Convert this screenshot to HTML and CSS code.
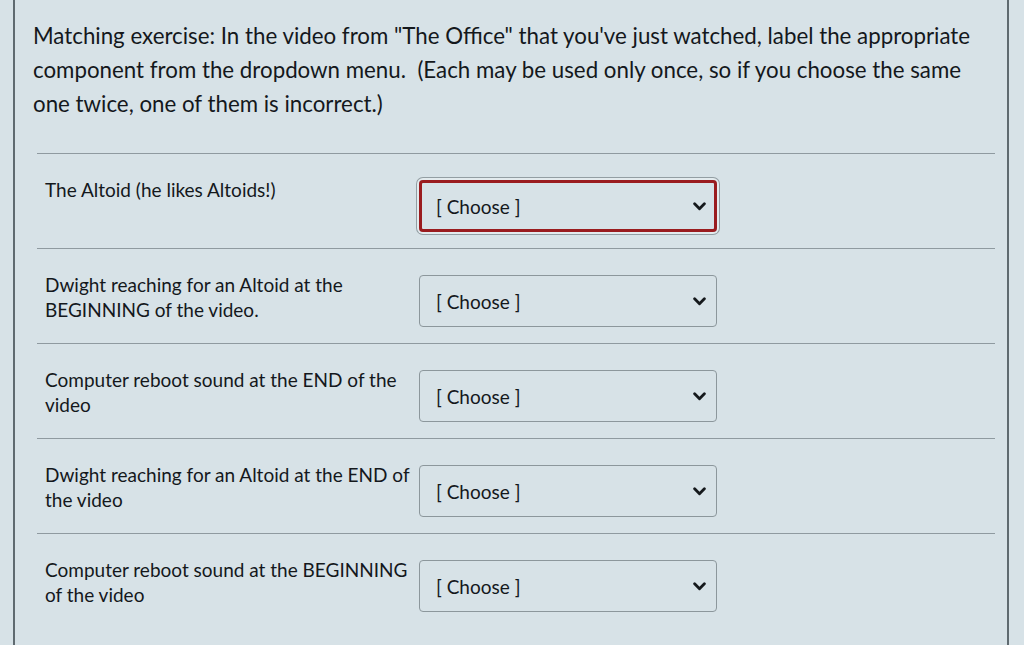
FILE: index.html
```html
<!DOCTYPE html>
<html lang="en">
<head>
<meta charset="utf-8">
<title>Matching exercise</title>
<link rel="stylesheet" href="styles.css">
</head>
<body>
<div class="page">
  <p class="prompt">Matching exercise: In the video from "The Office" that you've just watched, label the appropriate component from the dropdown menu.&nbsp; (Each may be used only once, so if you choose the same one twice, one of them is incorrect.)</p>
  <div class="list">
    <div class="row">
      <div class="label">The Altoid (he likes Altoids!)</div>
      <div class="select error"><span>[ Choose ]</span><svg class="chev" viewBox="0 0 12 8"><polyline points="1.5,1.5 6,6 10.5,1.5"/></svg></div>
    </div>
    <div class="row">
      <div class="label">Dwight reaching for an Altoid at the BEGINNING of the video.</div>
      <div class="select"><span>[ Choose ]</span><svg class="chev" viewBox="0 0 12 8"><polyline points="1.5,1.5 6,6 10.5,1.5"/></svg></div>
    </div>
    <div class="row">
      <div class="label">Computer reboot sound at the END of the video</div>
      <div class="select"><span>[ Choose ]</span><svg class="chev" viewBox="0 0 12 8"><polyline points="1.5,1.5 6,6 10.5,1.5"/></svg></div>
    </div>
    <div class="row">
      <div class="label">Dwight reaching for an Altoid at the END of the video</div>
      <div class="select"><span>[ Choose ]</span><svg class="chev" viewBox="0 0 12 8"><polyline points="1.5,1.5 6,6 10.5,1.5"/></svg></div>
    </div>
    <div class="row last">
      <div class="label">Computer reboot sound at the BEGINNING of the video</div>
      <div class="select"><span>[ Choose ]</span><svg class="chev" viewBox="0 0 12 8"><polyline points="1.5,1.5 6,6 10.5,1.5"/></svg></div>
    </div>
  </div>
</div>
</body>
</html>
```
FILE: styles.css
```css
html, body {
  margin: 0;
  padding: 0;
  background: #d7e2e7;
}
body {
  font-family: Lato, "Open Sans", "Liberation Sans", sans-serif;
  color: #14181c;
  width: 1024px;
  height: 645px;
  overflow: hidden;
}
.page {
  margin-left: 13px;
  width: 996px;
  min-height: 645px;
  border-left: 2px solid #5f6a70;
  border-right: 2px solid #5f6a70;
  box-sizing: border-box;
}
.prompt {
  margin: 0;
  width: 955px;
  padding: 19px 0 0 18px;
  font-size: 22.3px;
  line-height: 34px;
}
.list {
  margin: 32px 12px 0 22px;
  border-top: 1px solid #8f9aa0;
}
.row {
  display: flex;
  align-items: flex-start;
  gap: 8px;
  height: 95px;
  box-sizing: border-box;
  padding: 23px 0 0 8px;
  border-bottom: 1px solid #8f9aa0;
}
.row.last {
  border-bottom: none;
}
.label {
  width: 366px;
  font-size: 19px;
  line-height: 25px;
}
.select {
  margin-top: 3px;
  width: 298px;
  height: 52px;
  box-sizing: border-box;
  border: 1px solid #8c979c;
  border-radius: 4px;
  display: flex;
  align-items: center;
  justify-content: space-between;
  padding: 0 10px 0 16px;
  font-size: 19px;
}
.select.error {
  border: 3px solid #9a1c1f;
  padding: 0 8px 0 14px;
  box-shadow: 0 0 0 2px #e3ebee, 0 0 0 3px #939ea3;
}
.chev {
  width: 13px;
  height: 9px;
  fill: none;
  stroke: #15191c;
  stroke-width: 2.6;
  stroke-linecap: round;
  stroke-linejoin: round;
}
```
